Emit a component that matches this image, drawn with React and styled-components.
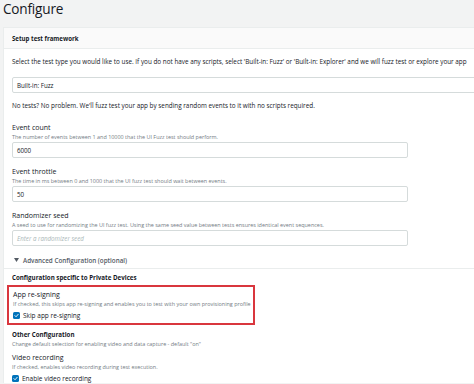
import React from "react";
import styled, { createGlobalStyle } from "styled-components";

const GlobalStyle = createGlobalStyle`
  html, body {
    margin: 0;
    padding: 0;
    background: #f2f3f3;
    overflow: hidden;
  }
  body {
    font-family: "Open Sans", "Noto Sans", sans-serif;
    color: #16191f;
  }
`;

function Checkbox() {
  return (
    <Box>
      <svg width="5" height="5" viewBox="0 0 10 10">
        <path d="M1.8 5.2 L4.1 7.5 L8.4 2.6" fill="none" stroke="#fff" strokeWidth="1.8" strokeLinecap="round" strokeLinejoin="round" />
      </svg>
    </Box>
  );
}

function Field({ label, desc, children }) {
  return (
    <Group>
      <Label>{label}</Label>
      <Desc>{desc}</Desc>
      {children}
    </Group>
  );
}

export default function App() {
  return (
    <Page>
      <GlobalStyle />
      <Title>Configure</Title>
      <Card>
        <CardHeader>Setup test framework</CardHeader>
        <CardBody>
          <Text $top={8}>
            Select the test type you would like to use. If you do not have any scripts, select 'Built-in: Fuzz' or 'Built-in: Explorer' and we will fuzz test or explore your app
          </Text>
          <Select>Built-in: Fuzz</Select>
          <Text $top={8}>No tests? No problem. We'll fuzz test your app by sending random events to it with no scripts required.</Text>

          <Fields>
            <Field label="Event count" desc="The number of events between 1 and 10000 that the UI Fuzz test should perform.">
              <Input>6000</Input>
            </Field>
            <Field label="Event throttle" desc="The time in ms between 0 and 1000 that the UI fuzz test should wait between events.">
              <Input>50</Input>
            </Field>
            <Field label="Randomizer seed" desc="A seed to use for randomizing the UI fuzz test. Using the same seed value between tests ensures identical event sequences.">
              <Input $placeholder>Enter a randomizer seed</Input>
            </Field>
          </Fields>

          <Expander>
            <svg width="5" height="4" viewBox="0 0 10 8">
              <path d="M0 0 L10 0 L5 8 Z" fill="#545b64" />
            </svg>
            Advanced Configuration (optional)
          </Expander>
          <Divider />

          <Heading>Configuration specific to Private Devices</Heading>
          <Highlight>
            <Label>App re-signing</Label>
            <SmallDesc>If checked, this skips app re-signing and enables you to test with your own provisioning profile</SmallDesc>
            <CheckRow>
              <Checkbox />
              Skip app re-signing
            </CheckRow>
          </Highlight>

          <Heading $top={5}>Other Configuration</Heading>
          <SmallDesc>Change default selection for enabling video and data capture - default "on"</SmallDesc>
          <Label $top={5}>Video recording</Label>
          <SmallDesc>If checked, enables video recording during test execution.</SmallDesc>
          <CheckRow $top={2}>
            <Checkbox />
            Enable video recording
          </CheckRow>
        </CardBody>
      </Card>
    </Page>
  );
}

const Page = styled.div`
  padding-left: 3px;
`;

const Title = styled.h1`
  margin: 0;
  font-size: 13.6px;
  font-weight: 400;
  line-height: 18px;
  letter-spacing: -0.2px;
  color: #16191f;
`;

const Card = styled.div`
  margin-top: 9px;
  width: 560px;
  background: #ffffff;
  border: 1px solid #eaeded;
  border-right: none;
  border-bottom: none;
`;

const CardHeader = styled.div`
  height: 20px;
  display: flex;
  align-items: center;
  padding: 0 8px;
  background: #fafafa;
  border-bottom: 1px solid #eaeded;
  font-size: 6.1px;
  font-weight: 700;
`;

const CardBody = styled.div`
  padding: 0 8px;
`;

const Text = styled.div`
  margin-top: ${(p) => p.$top || 0}px;
  font-size: 6.35px;
  line-height: 10px;
  white-space: nowrap;
`;

const fieldBox = `
  box-sizing: border-box;
  height: 16px;
  display: flex;
  align-items: center;
  padding: 0 4px;
  border: 1px solid #d5dbdb;
  border-radius: 2px;
  background: #fff;
  font-size: 6.2px;
`;

const Select = styled.div`
  ${fieldBox}
  margin-top: 10px;
  width: 100%;
`;

const Fields = styled.div`
  margin-top: 12px;
  display: flex;
  flex-direction: column;
  gap: 9px;
`;

const Group = styled.div`
  display: flex;
  flex-direction: column;
`;

const Label = styled.div`
  margin-top: ${(p) => p.$top || 0}px;
  font-size: 7px;
  line-height: 10px;
  white-space: nowrap;
`;

const Desc = styled.div`
  font-size: 5.45px;
  line-height: 9px;
  color: #737b83;
  white-space: nowrap;
`;

const SmallDesc = styled(Desc)`
  line-height: 8px;
`;

const Input = styled.div`
  ${fieldBox}
  width: 396px;
  color: ${(p) => (p.$placeholder ? "#aab7b8" : "#16191f")};
  font-style: ${(p) => (p.$placeholder ? "italic" : "normal")};
`;

const Expander = styled.div`
  margin-top: 9px;
  height: 10px;
  display: flex;
  align-items: center;
  gap: 4px;
  padding-left: 2px;
  font-size: 6.3px;
  font-weight: 600;
  color: #545b64;
  white-space: nowrap;
`;

const Divider = styled.div`
  margin: 3px -8px 0;
  border-top: 1px solid #eaeded;
`;

const Heading = styled.div`
  margin-top: ${(p) => p.$top || 4}px;
  font-size: 6.2px;
  line-height: 10px;
  font-weight: 700;
  white-space: nowrap;
`;

const Highlight = styled.div`
  margin: 2px 0 0 -5px;
  width: 248px;
  box-sizing: border-box;
  padding: 3px 0 3px 4px;
  border: 2px solid #d9363e;
`;

const CheckRow = styled.div`
  margin-top: ${(p) => p.$top || 2}px;
  height: 10px;
  display: flex;
  align-items: center;
  gap: 3px;
  font-size: 6.5px;
  white-space: nowrap;
`;

const Box = styled.span`
  width: 7px;
  height: 7px;
  border-radius: 1.5px;
  background: #0073bb;
  display: inline-flex;
  align-items: center;
  justify-content: center;
`;
